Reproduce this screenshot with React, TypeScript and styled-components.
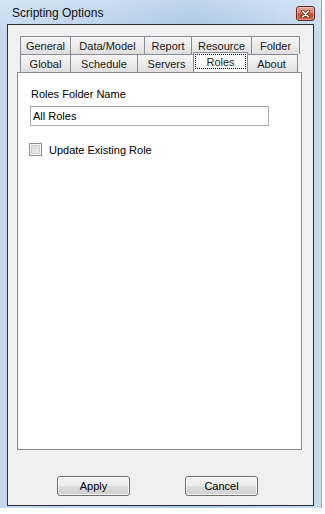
import styled, { createGlobalStyle } from 'styled-components';

const GlobalStyle = createGlobalStyle`
  html, body {
    margin: 0;
    padding: 0;
    background: #ffffff;
  }
  body {
    font-family: "Liberation Sans", Arial, sans-serif;
    font-size: 11px;
    color: #000;
  }
`;

const Window = styled.div`
  width: 322px;
  height: 508px;
  box-sizing: border-box;
  padding: 0 7px 2px 7px;
  display: flex;
  flex-direction: column;
  background:
    linear-gradient(to bottom, rgba(255, 255, 255, 0.25), rgba(255, 255, 255, 0) 30px),
    linear-gradient(to right, #c6daef 0%, #b9d1ea 35%, #aac6e4 60%, #bcd3eb 85%, #c9dcf0 100%);
  border-right: 1px solid #8aa6c4;
`;

const TitleBar = styled.div`
  height: 24px;
  flex: none;
  display: flex;
  align-items: center;
  justify-content: space-between;
  padding: 0 0 0 5px;
`;

const Title = styled.span`
  font-size: 12px;
  color: #111;
  padding-top: 1px;
`;

const CloseButton = styled.div`
  width: 17px;
  height: 13px;
  margin-right: -1px;
  margin-top: 3px;
  border: 1px solid #5a2a22;
  border-radius: 3px;
  background: linear-gradient(to bottom, #e9a99b 0%, #d77a63 45%, #c7482e 55%, #d0654a 100%);
  display: flex;
  align-items: center;
  justify-content: center;
  box-shadow: inset 0 0 0 1px rgba(255, 255, 255, 0.35);
`;

const Client = styled.div`
  flex: 1;
  display: flex;
  flex-direction: column;
  background: #f0f0f0;
  border: 1px solid #2b2f33;
  padding: 11px 0 0 9px;
`;

const TabControl = styled.div`
  width: 285px;
  display: flex;
  flex-direction: column;
`;

const TabRow = styled.div`
  display: flex;
  height: 18px;
  padding-left: 3px;
`;

const Tab = styled.div<{ $w: number; $selected?: boolean }>`
  width: ${({ $w }) => $w}px;
  box-sizing: border-box;
  display: flex;
  align-items: center;
  justify-content: center;
  border: 1px solid #898c95;
  border-bottom: none;
  margin-right: -1px;
  color: #1a1a1a;
  background: linear-gradient(to bottom, #f6f6f6 0%, #ececec 50%, #dedede 100%);
  ${({ $selected }) =>
    $selected &&
    `
    position: relative;
    z-index: 2;
    height: 20px;
    margin-top: -2px;
    margin-left: -2px;
    margin-right: -3px;
    margin-bottom: -1px;
    background: #ffffff;
    padding: 1px 1px 3px 1px;
  `}
`;

const FocusRect = styled.span`
  flex: 1;
  align-self: stretch;
  display: flex;
  align-items: flex-start;
  justify-content: center;
  border: 1px dotted #000;
  line-height: 14px;
`;

const TabPanel = styled.div`
  height: 378px;
  box-sizing: border-box;
  background: #ffffff;
  border: 1px solid #898c95;
  padding: 15px 12px 0 12px;
  display: flex;
  flex-direction: column;
`;

const FieldLabel = styled.label`
  line-height: 13px;
  padding-left: 1px;
`;

const TextBox = styled.div`
  margin-top: 5px;
  width: 239px;
  height: 20px;
  box-sizing: border-box;
  border: 1px solid #abadb3;
  border-top-color: #a0a2a8;
  padding: 0 2px;
  display: flex;
  align-items: center;
  background: #fff;
`;

const CheckRow = styled.div`
  margin-top: 17px;
  display: flex;
  align-items: center;
  gap: 7px;
  margin-left: -1px;
`;

const CheckBox = styled.span`
  width: 13px;
  height: 13px;
  box-sizing: border-box;
  border: 1px solid #8e8f8f;
  background: linear-gradient(135deg, #d6d6d6 0%, #eeeeee 100%);
  box-shadow: inset 0 0 0 1px #f4f4f4, inset 0 0 0 2px #cfcfcf;
`;

const ButtonBar = styled.div`
  display: flex;
  gap: 55px;
  padding-left: 40px;
  margin-top: 26px;
`;

const Button = styled.div`
  width: 73px;
  height: 20px;
  box-sizing: border-box;
  border: 1px solid #707070;
  border-radius: 3px;
  background: linear-gradient(to bottom, #f2f2f2 0%, #ebebeb 50%, #dddddd 50%, #cfcfcf 100%);
  box-shadow: inset 0 0 0 1px rgba(255, 255, 255, 0.8);
  display: flex;
  align-items: center;
  justify-content: center;
`;

const row1 = [
  { label: 'General', w: 51 },
  { label: 'Data/Model', w: 75 },
  { label: 'Report', w: 48 },
  { label: 'Resource', w: 61 },
  { label: 'Folder', w: 49 },
];

const row2 = [
  { label: 'Global', w: 51 },
  { label: 'Schedule', w: 68 },
  { label: 'Servers', w: 59 },
  { label: 'Roles', w: 53, selected: true },
  { label: 'About', w: 53 },
];

export default function App() {
  return (
    <>
      <GlobalStyle />
      <Window>
        <TitleBar>
          <Title>Scripting Options</Title>
          <CloseButton>
            <svg width="9" height="8" viewBox="0 0 9 8">
              <path d="M1.5 1 L7.5 7 M7.5 1 L1.5 7" stroke="#4a2019" strokeWidth="3" strokeLinecap="round" />
              <path d="M1.5 1 L7.5 7 M7.5 1 L1.5 7" stroke="#ffffff" strokeWidth="1.6" strokeLinecap="round" />
            </svg>
          </CloseButton>
        </TitleBar>
        <Client>
          <TabControl>
            <TabRow>
              {row1.map((t) => (
                <Tab key={t.label} $w={t.w}>
                  {t.label}
                </Tab>
              ))}
            </TabRow>
            <TabRow>
              {row2.map((t) =>
                t.selected ? (
                  <Tab key={t.label} $w={t.w + 2} $selected>
                    <FocusRect>{t.label}</FocusRect>
                  </Tab>
                ) : (
                  <Tab key={t.label} $w={t.w}>
                    {t.label}
                  </Tab>
                ),
              )}
            </TabRow>
            <TabPanel>
              <FieldLabel>Roles Folder Name</FieldLabel>
              <TextBox>All Roles</TextBox>
              <CheckRow>
                <CheckBox />
                <span>Update Existing Role</span>
              </CheckRow>
            </TabPanel>
          </TabControl>
          <ButtonBar>
            <Button>Apply</Button>
            <Button>Cancel</Button>
          </ButtonBar>
        </Client>
      </Window>
    </>
  );
}
